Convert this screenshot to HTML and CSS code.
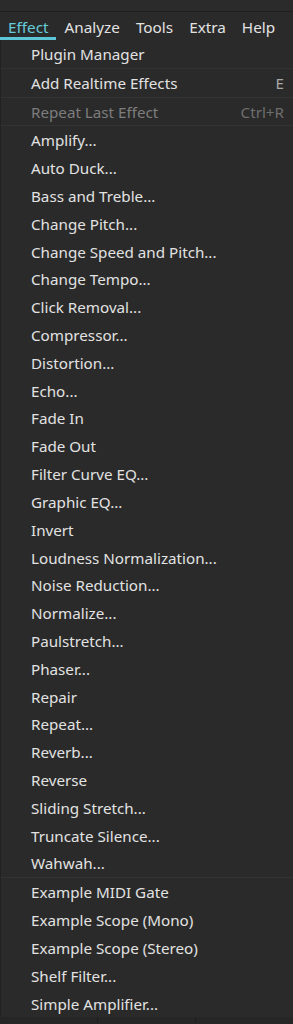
FILE: index.html
```html
<!DOCTYPE html>
<html lang="en">
  <head>
    <meta charset="UTF-8" />
    <meta name="viewport" content="width=device-width, initial-scale=1.0" />
    <title>Effect menu</title>
    <link rel="stylesheet" href="styles.css">
  </head>
  <body>
    <div class="titlebar"></div>

    <!-- Menu bar -->
    <div class="menubar">
      <span class="menubar-item active">Effect</span>
      <span class="menubar-item">Analyze</span>
      <span class="menubar-item">Tools</span>
      <span class="menubar-item">Extra</span>
      <span class="menubar-item">Help</span>
    </div>

    <!-- Effect dropdown -->
    <div class="menu">
      <div class="item sep">Plugin Manager</div>
      <div class="item sep">Add Realtime Effects<span class="shortcut">E</span></div>
      <div class="item sep disabled">Repeat Last Effect<span class="shortcut">Ctrl+R</span></div>
      <div class="item">Amplify...</div>
      <div class="item">Auto Duck...</div>
      <div class="item">Bass and Treble...</div>
      <div class="item">Change Pitch...</div>
      <div class="item">Change Speed and Pitch...</div>
      <div class="item">Change Tempo...</div>
      <div class="item">Click Removal...</div>
      <div class="item">Compressor...</div>
      <div class="item">Distortion...</div>
      <div class="item">Echo...</div>
      <div class="item">Fade In</div>
      <div class="item">Fade Out</div>
      <div class="item">Filter Curve EQ...</div>
      <div class="item">Graphic EQ...</div>
      <div class="item">Invert</div>
      <div class="item">Loudness Normalization...</div>
      <div class="item">Noise Reduction...</div>
      <div class="item">Normalize...</div>
      <div class="item">Paulstretch...</div>
      <div class="item">Phaser...</div>
      <div class="item">Repair</div>
      <div class="item">Repeat...</div>
      <div class="item">Reverb...</div>
      <div class="item">Reverse</div>
      <div class="item">Sliding Stretch...</div>
      <div class="item">Truncate Silence...</div>
      <div class="item sep">Wahwah...</div>
      <div class="item">Example MIDI Gate</div>
      <div class="item">Example Scope (Mono)</div>
      <div class="item">Example Scope (Stereo)</div>
      <div class="item">Shelf Filter...</div>
      <div class="item">Simple Amplifier...</div>
    </div>

    <div class="footer">
      <div class="pane"></div>
      <div class="pane"></div>
      <div class="pane"></div>
    </div>
  </body>
</html>
```

FILE: styles.css
```css
* {
  box-sizing: border-box;
  margin: 0;
  padding: 0;
}

body {
  width: 293px;
  height: 1024px;
  overflow: hidden;
  background-color: #262626;
  font-family: "Noto Sans", "Open Sans", sans-serif;
  color: #e2e2e2;
}

.titlebar {
  height: 12px;
  background-color: #2b2b2b;
  border-bottom: 1px solid #1e1e1e;
}

/* Menu bar */
.menubar {
  display: flex;
  height: 28px;
  background-color: #2a2a2a;
  font-size: 15.3px;
}

.menubar-item {
  padding: 5px 7px 0 8px;
  line-height: 20px;
  margin-right: 1px;
  border-bottom: 3px solid transparent;
}

.menubar-item.active {
  color: #66ccd9;
  border-bottom-color: #5cc6d6;
}

/* Dropdown */
.menu {
  background-color: #2a2a2a;
  border-left: 1px solid #222;
  font-size: 15.2px;
}

.item {
  display: flex;
  justify-content: space-between;
  align-items: center;
  height: 27.82px;
  padding: 0 9px 0 30px;
  white-space: nowrap;
}

.item.sep {
  height: 28.82px;
  border-bottom: 1px solid #333;
}

.item.disabled {
  color: #7d7d7d;
}

.shortcut {
  color: #a8a8a8;
}

.disabled .shortcut {
  color: #6e6e6e;
}

.footer {
  display: flex;
  height: 6px;
  background-color: #1f1f1f;
  gap: 1px;
}

.pane {
  flex: 1;
  background-color: #262626;
}
```
